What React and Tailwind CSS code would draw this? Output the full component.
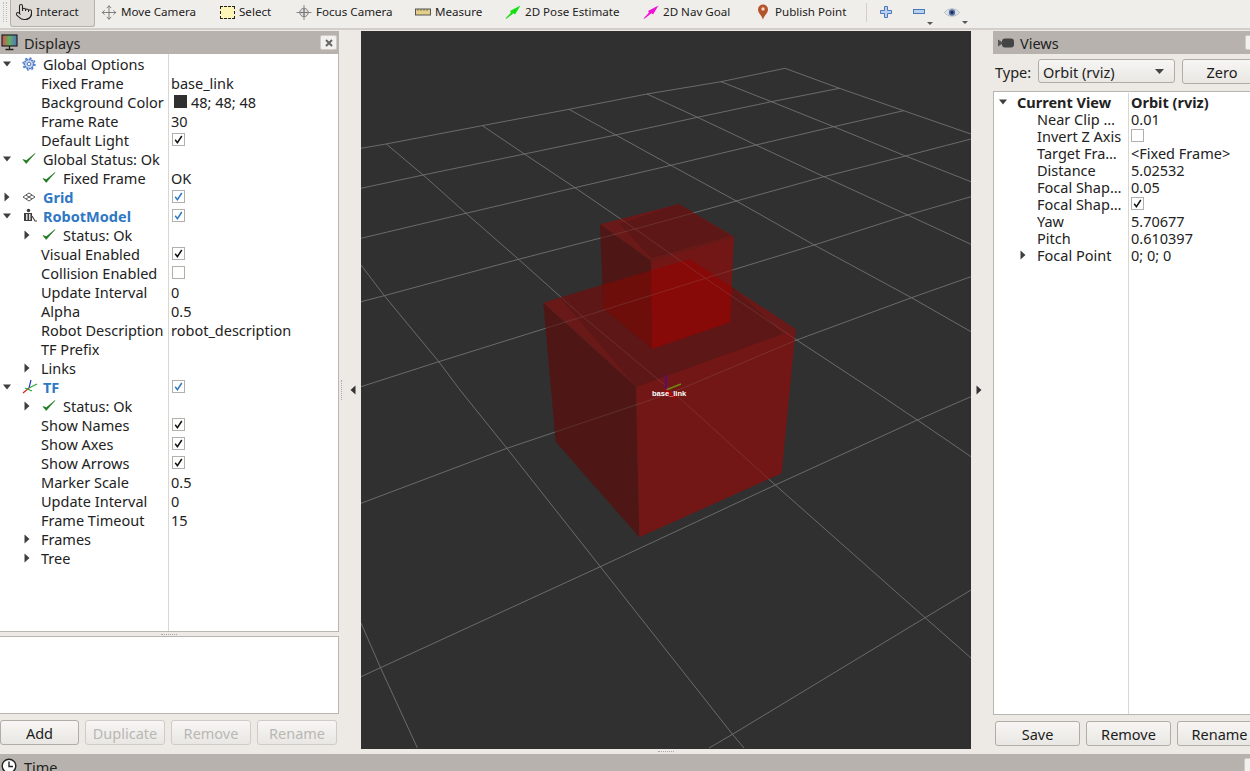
import { Pointer, Move } from "lucide-react"

// grid lines in page pixels, viewBox of the viewport lines up with them
const gridLines = [
  "361,148.3 386,144 482,125.7 569,109.3 647,94 721,81.7 785,68.3",
  "361,188.3 423.2,175 524.4,154 615.8,135 697.5,117.3 771.4,101.7 839.5,88.3",
  "361,238.3 466,213.3 575,187.7 672.2,165 755.9,145 833.7,126.7 903.7,110.7",
  "361,301.7 384.3,295.7 518.6,259.3 635.3,229 736.4,201 824,176.7 905.6,156 971,139",
  "361,386.7 438.8,361.7 582.8,316.7 705.3,278.3 814.2,245 907.6,215 971,196.7",
  "361,503.3 506.9,448.3 670.3,393.3 796.7,340 911.5,297.7 971,276.7",
  "361,676.7 380.5,667.7 600.3,566.7 775.3,485 917.3,420 971,396.7",
  "709,748 732.5,734.3 925.1,617.7 971,590",
  "785,68.3 839.5,88.3 903.7,110.7 971,134",
  "721,81.7 771.4,101.7 833.7,126.7 905.6,156 971,181.7",
  "647,94 697.5,117.3 755.9,145 824,176.7 907.6,215 971,244.3",
  "569,109.3 615.8,135 670.3,165 736.4,201 814.2,245 911.5,297.7 971,331.7",
  "482.4,125.7 524.4,154 575,187.7 635.3,229 705.3,278.3 796.7,340 872.7,390 917.3,420 971,456.7",
  "386.3,144 423.2,175 466,213.3 518.6,259.3 582.8,316.7 668.4,388 775.3,485 925.1,617.7 971,658",
  "361,265 384.3,295.7 438.8,361.7 460,390 506.9,448.3 600.3,566.7 732.5,734.3 744,748",
  "361,623 380.5,667.7 417.4,748",
]

const boxFaces = [
  ["543.3,302.7 636,386.7 639.3,537.3 555.7,441.7", "#4f1816"],
  ["636,386.7 795.7,329 781.7,473.3 639.3,537.3", "#721816"],
  ["543.3,302.7 689.3,259 795.7,329 636,386.7", "#691a19"],
  ["560,297.5 689.3,259 732,287 783,333.5 636,386.7", "#5e1817"],
  ["600,224.3 651,260.7 652,349 603.3,308.3", "#4f1816"],
  ["651,260.7 734,236.7 730,322.3 652,349", "#721816"],
  ["600,224.3 679,204 734,236.7 651,260.7", "#691a19"],
  ["620,224 679,204 730,236 651,258", "#5e1817"],
  ["603,284.7 651,270.4 652,349 603.3,308.3", "#6d0f0c"],
  ["651,270.4 689.3,259 731.7,287 730,322.3 652,349", "#870b09"],
]

const Arrow = ({ open }) =>
  open ? (
    <svg width="10" height="6" viewBox="0 0 10 6"><path d="M1 0.5h8L5 5.5z" fill="#3f3f3f" /></svg>
  ) : (
    <svg width="6" height="10" viewBox="0 0 6 10"><path d="M0.5 0.5v9L5.5 5z" fill="#3f3f3f" /></svg>
  )

const CheckBox = ({ on, blue, small }) => (
  <span className={`flex items-center justify-center bg-white border border-[#b3b0ac] ${small ? "w-[13px] h-[13px]" : "w-[13px] h-[13px] ml-px"}`}>
    {on && (
      <svg width="9" height="9" viewBox="0 0 9 9">
        <path d="M1.2 4.8 3.4 7.6 7.8 1" fill="none" stroke={blue ? "#2e78c4" : "#111"} strokeWidth="1.5" />
      </svg>
    )}
  </span>
)

const GreenCheck = () => (
  <svg width="14" height="13" viewBox="0 0 14 13">
    <path d="M1 7.5 4.2 11.5 13 1.5 4.4 8.6z" fill="#1f7a1f" stroke="#1f7a1f" strokeWidth="0.6" />
  </svg>
)

const GearIcon = () => (
  <svg width="14" height="14" viewBox="0 0 14 14">
    <circle cx="7" cy="7" r="4.6" fill="#cfdcf2" stroke="#4a78c8" strokeWidth="1.6" strokeDasharray="2 0.6" />
    <circle cx="7" cy="7" r="6" fill="none" stroke="#4a78c8" strokeWidth="1.4" strokeDasharray="2 2.7" />
    <circle cx="7" cy="7" r="1.8" fill="#fff" stroke="#4a78c8" />
  </svg>
)

const GridIcon = () => (
  <svg width="14" height="10" viewBox="0 0 14 10" fill="none" stroke="#444" strokeWidth="0.9">
    <path d="M7 1 13 5 7 9 1 5z" />
    <path d="M4 3 10 7M10 3 4 7" />
  </svg>
)

const RobotIcon = () => (
  <svg width="16" height="15" viewBox="0 0 16 15">
    <circle cx="6.5" cy="2.5" r="1.8" fill="#444" />
    <rect x="2" y="5" width="8" height="8" fill="#3d3d3d" />
    <rect x="4" y="6" width="1.5" height="6" fill="#ddd" />
    <rect x="7" y="6" width="1.5" height="6" fill="#ddd" />
    <path d="M10 8 13 13H15" fill="none" stroke="#444" strokeWidth="1.2" />
  </svg>
)

const AxesIcon = () => (
  <svg width="16" height="16" viewBox="0 0 16 16" fill="none" strokeWidth="1.2">
    <path d="M7 9 9 1" stroke="#2233cc" />
    <path d="M7 9 15 5" stroke="#22aa33" />
    <path d="M7 9 1 14" stroke="#dd2222" />
    <path d="M3 9 10 12" stroke="#22aa33" />
  </svg>
)

const displayRows = [
  { level: 0, arrow: "open", icon: <GearIcon />, name: "Global Options" },
  { level: 1, name: "Fixed Frame", value: "base_link" },
  { level: 1, name: "Background Color", swatch: true, value: "48; 48; 48" },
  { level: 1, name: "Frame Rate", value: "30" },
  { level: 1, name: "Default Light", check: "on" },
  { level: 0, arrow: "open", icon: <GreenCheck />, name: "Global Status: Ok" },
  { level: 1, icon: <GreenCheck />, name: "Fixed Frame", value: "OK" },
  { level: 0, arrow: "closed", icon: <GridIcon />, name: "Grid", blue: true, check: "blue" },
  { level: 0, arrow: "open", icon: <RobotIcon />, name: "RobotModel", blue: true, check: "blue" },
  { level: 1, arrow: "closed", icon: <GreenCheck />, name: "Status: Ok" },
  { level: 1, name: "Visual Enabled", check: "on" },
  { level: 1, name: "Collision Enabled", check: "off" },
  { level: 1, name: "Update Interval", value: "0" },
  { level: 1, name: "Alpha", value: "0.5" },
  { level: 1, name: "Robot Description", value: "robot_description" },
  { level: 1, name: "TF Prefix" },
  { level: 1, arrow: "closed", name: "Links" },
  { level: 0, arrow: "open", icon: <AxesIcon />, name: "TF", blue: true, check: "blue" },
  { level: 1, arrow: "closed", icon: <GreenCheck />, name: "Status: Ok" },
  { level: 1, name: "Show Names", check: "on" },
  { level: 1, name: "Show Axes", check: "on" },
  { level: 1, name: "Show Arrows", check: "on" },
  { level: 1, name: "Marker Scale", value: "0.5" },
  { level: 1, name: "Update Interval", value: "0" },
  { level: 1, name: "Frame Timeout", value: "15" },
  { level: 1, arrow: "closed", name: "Frames" },
  { level: 1, arrow: "closed", name: "Tree" },
]

const viewRows = [
  { level: 0, arrow: "open", name: "Current View", value: "Orbit (rviz)", bold: true },
  { level: 1, name: "Near Clip …", value: "0.01" },
  { level: 1, name: "Invert Z Axis", check: "off" },
  { level: 1, name: "Target Fra…", value: "<Fixed Frame>" },
  { level: 1, name: "Distance", value: "5.02532" },
  { level: 1, name: "Focal Shap…", value: "0.05" },
  { level: 1, name: "Focal Shap…", check: "on" },
  { level: 1, name: "Yaw", value: "5.70677" },
  { level: 1, name: "Pitch", value: "0.610397" },
  { level: 1, arrow: "closed", name: "Focal Point", value: "0; 0; 0" },
]

const DisplayRow = ({ row }) => (
  <div className="flex h-[19px] shrink-0 items-center">
    <div className={`flex h-full w-[169px] shrink-0 items-center whitespace-nowrap border-r border-[#d9d7d4] ${row.level === 1 ? "pl-[20px]" : ""}`}>
      <span className="flex w-[14px] shrink-0 justify-center">
        {row.arrow && <Arrow open={row.arrow === "open"} />}
      </span>
      {row.icon ? (
        <span className="flex w-[29px] shrink-0 items-center pl-[8px]">{row.icon}</span>
      ) : (
        <span className="w-[7px] shrink-0" />
      )}
      <span className={`pt-[2px] ${row.blue ? "font-bold text-[#2e78c4]" : ""}`}>{row.name}</span>
    </div>
    <div className="flex items-center gap-[4px] pl-[2px]">
      {row.swatch && <span className="ml-[3px] h-[13px] w-[13px] bg-[#303030]" />}
      {row.value && <span className="pt-[2px]">{row.value}</span>}
      {row.check && <CheckBox on={row.check !== "off"} blue={row.check === "blue"} />}
    </div>
  </div>
)

const ViewRow = ({ row }) => (
  <div className="flex h-[17px] shrink-0 items-center">
    <div className={`flex h-full w-[135px] shrink-0 items-center whitespace-nowrap border-r border-[#d9d7d4] ${row.level === 1 ? "pl-[20px]" : ""}`}>
      <span className="flex w-[17px] shrink-0 justify-center">
        {row.arrow && <Arrow open={row.arrow === "open"} />}
      </span>
      <span className={`pl-[6px] pt-[2px] ${row.bold ? "font-bold" : ""}`}>{row.name}</span>
    </div>
    <div className={`flex items-center pl-[2px] ${row.bold ? "font-bold" : ""}`}>
      {row.value && <span className="pt-[2px]">{row.value}</span>}
      {row.check && <CheckBox small on={row.check !== "off"} />}
    </div>
  </div>
)

const Btn = ({ children, disabled, className }) => (
  <button className={`h-[25px] shrink-0 rounded-[3px] border bg-gradient-to-b from-[#f7f6f4] to-[#e9e7e3] pt-[2px] leading-none ${disabled ? "border-[#cfccc8] text-[#b9b7b4]" : "border-[#b0aca6] text-[#1c1c1c]"} ${className}`}>
    {children}
  </button>
)

const CloseBtn = () => (
  <span className="flex h-[15px] w-[17px] items-center justify-center rounded-[2px] border border-[#cfccc8] bg-[#f2f1ef]">
    <svg width="8" height="8" viewBox="0 0 8 8"><path d="M1 1 7 7M7 1 1 7" stroke="#666" strokeWidth="2" /></svg>
  </span>
)

const ToolItem = ({ icon, label, className }) => (
  <div className={`flex h-full shrink-0 items-center gap-[4px] whitespace-nowrap ${className}`}>
    <span className="flex w-[16px] shrink-0 justify-center">{icon}</span>
    <span>{label}</span>
  </div>
)

const Viewport = () => (
  <svg viewBox="361 31 610 718" className="block h-[718px] w-[610px] shrink-0 bg-[#303030]">
    <defs>
      <clipPath id="boxes">
        <polygon points="543.3,302.7 689.3,259 795.7,329 781.7,473.3 639.3,537.3 555.7,441.7" />
        <polygon points="600,224.3 679,204 734,236.7 730,322.3 652,349 603.3,308.3" />
      </clipPath>
    </defs>
    <g fill="none" stroke="#7a7a7a" strokeWidth="0.8">
      {gridLines.map((p, i) => <polyline key={i} points={p} />)}
    </g>
    {boxFaces.map(([p, c], i) => <polygon key={i} points={p} fill={c} />)}
    <g fill="none" stroke="#a0a0a0" strokeWidth="0.8" opacity="0.22" clipPath="url(#boxes)">
      {gridLines.map((p, i) => <polyline key={i} points={p} />)}
    </g>
    <path d="M666 375V390" stroke="#5a0a70" strokeWidth="2" />
    <path d="M666 390 681 384" stroke="#6e8a10" strokeWidth="1.5" />
    <path d="M666 390 675 398" stroke="#c00000" strokeWidth="2" />
    <text x="652" y="396" fill="#fff" fontSize="7.5" fontWeight="700" fontFamily="'Liberation Sans', sans-serif">base_link</text>
  </svg>
)

export default function App() {
  return (
    <div className="flex h-[771px] w-[1250px] flex-col overflow-hidden bg-[#edeae5] text-[14.5px] leading-none text-[#222] [font-family:'Noto_Sans',sans-serif]">
      {/* toolbar */}
      <div className="flex h-[30px] shrink-0 items-center border-b-2 border-[#d2cfca] bg-[#f0eeea] pb-[4px] pl-[3px] text-[11.6px]">
        <div className="mr-[3px] h-[20px] w-[4px] border-x border-dotted border-[#bbb]" />
        <div className="mr-[6px] flex h-[27px] w-[85px] shrink-0 self-start items-center gap-[3px] rounded-b-[3px] border border-t-0 border-[#b5b1aa] bg-[#dfdcd7] pb-[3px] pl-[4px]">
          <Pointer size={18} strokeWidth={1.4} color="#222" />
          <span>Interact</span>
        </div>
        <ToolItem className="w-[118px]" label="Move Camera" icon={<Move size={17} strokeWidth={1.2} color="#666" />} />
        <ToolItem
          className="w-[77px]"
          label="Select"
          icon={<span className="h-[13px] w-[15px] border border-dashed border-[#222] bg-[#fdf6b8]" />}
        />
        <ToolItem
          className="w-[119px]"
          label="Focus Camera"
          icon={
            <svg width="17" height="17" viewBox="0 0 17 17" fill="none" stroke="#777" strokeWidth="0.9">
              <circle cx="8.5" cy="8.5" r="4.5" fill="#ddd" />
              <path d="M8.5 0.5V16.5M0.5 8.5H16.5M4 8.5H13M8.5 4V13" />
            </svg>
          }
        />
        <ToolItem
          className="w-[90px]"
          label="Measure"
          icon={
            <svg width="16" height="8" viewBox="0 0 16 8">
              <rect x="0.5" y="1" width="15" height="6" fill="#e3cf8a" stroke="#555" />
              <path d="M3 1V3M6 1V3M9 1V3M12 1V3" stroke="#555" strokeWidth="0.7" />
            </svg>
          }
        />
        <ToolItem
          className="w-[138px]"
          label="2D Pose Estimate"
          icon={
            <svg width="16" height="14" viewBox="0 0 16 14">
              <path d="M0.5 13.5 6 7.5 5 6 15.5 0.5 10 9.5 8.5 8.2 1.5 13.8z" fill="#12e012" />
            </svg>
          }
        />
        <ToolItem
          className="w-[112px]"
          label="2D Nav Goal"
          icon={
            <svg width="16" height="14" viewBox="0 0 16 14">
              <path d="M0.5 13.5 6 7.5 5 6 15.5 0.5 10 9.5 8.5 8.2 1.5 13.8z" fill="#f010d8" />
            </svg>
          }
        />
        <ToolItem
          className="w-[111px] gap-[2px]"
          label="Publish Point"
          icon={
            <svg width="12" height="16" viewBox="0 0 12 16">
              <path d="M6 15.5C4.5 11 1 9 1 5.5a5 5 0 0 1 10 0C11 9 7.5 11 6 15.5z" fill="#b5532a" />
              <circle cx="6" cy="5" r="1.7" fill="#f0d8c8" />
            </svg>
          }
        />
        <div className="h-[19px] w-px bg-[#d2cfca]" />
        <div className="ml-[13px] flex w-[33px] shrink-0">
          <svg width="12" height="12" viewBox="0 0 12 12">
            <path d="M4.5 0.5h3v4h4v3h-4v4h-3v-4h-4v-3h4z" fill="#b9d0ee" stroke="#4a78b8" />
          </svg>
        </div>
        <div className="relative flex w-[31px] shrink-0">
          <svg width="12" height="6" viewBox="0 0 12 6"><rect x="0.5" y="0.5" width="11" height="4" fill="#b9d0ee" stroke="#4a78b8" /></svg>
          <svg className="absolute left-[14px] top-[13px]" width="6" height="3" viewBox="0 0 6 3"><path d="M0 0H6L3 3z" fill="#555" /></svg>
        </div>
        <div className="relative flex shrink-0">
          <svg width="16" height="11" viewBox="0 0 16 11">
            <path d="M0.5 5.5C4 0.5 12 0.5 15.5 5.5 12 10.5 4 10.5 0.5 5.5z" fill="#dfe3ea" stroke="#9aa" strokeWidth="0.6" />
            <circle cx="8" cy="5.5" r="3.2" fill="#5570a8" />
            <circle cx="8" cy="5.5" r="1.4" fill="#1c2540" />
          </svg>
          <svg className="absolute left-[18px] top-[14px]" width="6" height="3" viewBox="0 0 6 3"><path d="M0 0H6L3 3z" fill="#555" /></svg>
        </div>
      </div>

      {/* main area */}
      <div className="flex h-[724px] shrink-0 pt-px">
        {/* Displays */}
        <div className="flex w-[339px] shrink-0 flex-col">
          <div className="flex h-[23px] shrink-0 items-center justify-between bg-[#b7b2ad] pl-[1px] pr-[2px]">
            <div className="flex items-center gap-[6px]">
              <svg width="17" height="17" viewBox="0 0 17 17">
                <defs>
                  <linearGradient id="screen" x1="0" x2="1" y1="0" y2="0">
                    <stop offset="0" stopColor="#d05050" />
                    <stop offset="0.5" stopColor="#60b060" />
                    <stop offset="1" stopColor="#5070c0" />
                  </linearGradient>
                </defs>
                <rect x="1" y="1" width="15" height="11" fill="url(#screen)" stroke="#222" strokeWidth="1.2" />
                <path d="M8.5 12V15M4.5 15.5H12.5" stroke="#222" strokeWidth="1.3" />
              </svg>
              <span className="pt-[2px] text-[#222]">Displays</span>
            </div>
            <CloseBtn />
          </div>
          <div className="flex h-[578px] shrink-0 flex-col border-r border-b border-[#b9b5b0] bg-white">
            {displayRows.map((row, i) => <DisplayRow key={i} row={row} />)}
            <div className="w-[169px] flex-1 border-r border-[#d9d7d4]" />
          </div>
          <div className="flex h-[4px] shrink-0 items-center justify-center pr-[2px]">
            <div className="h-px w-[16px] border-t border-dotted border-[#aaa]" />
          </div>
          <div className="h-[78px] shrink-0 border-r border-y border-[#b9b5b0] bg-white" />
          <div className="mt-[6px] flex gap-[6px]">
            <Btn className="w-[79px]">Add</Btn>
            <Btn disabled className="w-[80px]">Duplicate</Btn>
            <Btn disabled className="w-[80px]">Remove</Btn>
            <Btn disabled className="w-[80px]">Rename</Btn>
          </div>
        </div>

        {/* left splitter */}
        <div className="flex h-[718px] w-[22px] shrink-0 items-center pl-[2px]">
          <div className="h-[20px] w-px border-l border-dotted border-[#aaa]" />
          <svg className="ml-[8px]" width="6" height="10" viewBox="0 0 6 10"><path d="M5.5 0.5v9L0.5 5z" fill="#333" /></svg>
        </div>

        <div className="flex w-[610px] shrink-0 flex-col">
          <Viewport />
          <div className="flex h-[6px] items-center justify-center">
            <div className="h-px w-[16px] border-t border-dotted border-[#aaa]" />
          </div>
        </div>

        {/* right splitter */}
        <div className="flex h-[718px] w-[22px] shrink-0 items-center justify-center pr-[6px]">
          <svg width="6" height="10" viewBox="0 0 6 10"><path d="M0.5 0.5v9L5.5 5z" fill="#333" /></svg>
        </div>

        {/* Views */}
        <div className="flex w-[272px] shrink-0 flex-col">
          <div className="flex h-[23px] shrink-0 items-center justify-between bg-[#b7b2ad] pl-[5px] pr-[3px]">
            <div className="flex items-center gap-[6px]">
              <svg width="16" height="10" viewBox="0 0 16 10">
                <path d="M0 1.5 4 4V6L0 8.5z" fill="#555" />
                <rect x="4" y="0.5" width="12" height="9" rx="3" fill="#444" />
              </svg>
              <span className="pt-[2px]">Views</span>
            </div>
            <CloseBtn />
          </div>
          <div className="mt-[5px] flex h-[24px] shrink-0 items-center">
            <span className="w-[45px] shrink-0 pl-[2px] pt-[2px]">Type:</span>
            <div className="flex h-full w-[137px] shrink-0 items-center justify-between rounded-[3px] border border-[#b0aca6] bg-gradient-to-b from-[#f7f6f4] to-[#e9e7e3] pl-[4px] pr-[10px]">
              <span className="pt-[2px]">Orbit (rviz)</span>
              <svg width="9" height="5" viewBox="0 0 9 5"><path d="M0 0H9L4.5 5z" fill="#444" /></svg>
            </div>
            <Btn className="ml-[7px] w-[80px]">Zero</Btn>
          </div>
          <div className="mt-[8px] flex h-[624px] shrink-0 flex-col border border-[#b9b5b0] bg-white pt-px">
            {viewRows.map((row, i) => <ViewRow key={i} row={row} />)}
            <div className="w-[135px] flex-1 border-r border-[#d9d7d4]" />
          </div>
          <div className="mt-[6px] flex gap-[6px] pl-[2px]">
            <Btn className="w-[85px]">Save</Btn>
            <Btn className="w-[85px]">Remove</Btn>
            <Btn className="w-[85px]">Rename</Btn>
          </div>
        </div>
      </div>

      {/* Time dock, cut by the window */}
      <div className="flex h-[17px] shrink-0 items-start justify-between overflow-hidden bg-[#b7b2ad] pl-[1px] pr-[1px] pt-[4px]">
        <div className="flex items-start gap-[7px]">
          <svg width="16" height="16" viewBox="0 0 16 16">
            <circle cx="8" cy="8" r="6.8" fill="#fff" stroke="#222" strokeWidth="1.4" />
            <path d="M8 3.5V8.5H12" fill="none" stroke="#222" strokeWidth="1.4" />
          </svg>
          <span className="pt-[2px]">Time</span>
        </div>
        <span className="mr-[-10px] h-[15px] w-[15px] rounded-[2px] border border-[#cfccc8] bg-[#f2f1ef]" />
      </div>
    </div>
  )
}
